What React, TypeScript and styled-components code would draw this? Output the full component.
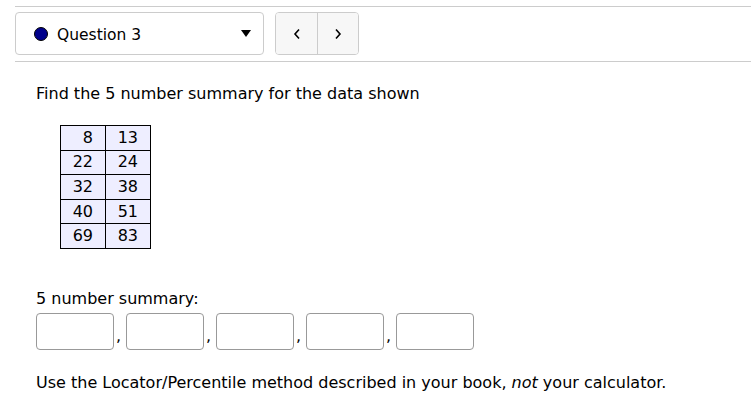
import * as React from 'react'
import styled, { createGlobalStyle } from 'styled-components'

const GlobalStyle = createGlobalStyle`
  html, body {
    margin: 0;
    padding: 0;
    background: #fff;
  }
  body {
    font-family: 'DejaVu Sans', Verdana, sans-serif;
    color: #000;
  }
`

const data = [
  [8, 13],
  [22, 24],
  [32, 38],
  [40, 51],
  [69, 83],
]

export default function App() {
  return (
    <>
      <GlobalStyle />
      <Page>
        <HeaderBar>
          <QuestionSelect>
            <StatusDot />
            <SelectLabel>Question 3</SelectLabel>
            <Caret />
          </QuestionSelect>
          <NavGroup>
            <NavButton aria-label='previous'>
              <Chevron dir='left' />
            </NavButton>
            <NavButton aria-label='next'>
              <Chevron dir='right' />
            </NavButton>
          </NavGroup>
        </HeaderBar>
        <Body>
          <Prompt>Find the 5 number summary for the data shown</Prompt>
          <DataTable>
            <tbody>
              {data.map((row, i) => (
                <tr key={i}>
                  {row.map((v, j) => (
                    <Cell key={j}>{v}</Cell>
                  ))}
                </tr>
              ))}
            </tbody>
          </DataTable>
          <SummaryLabel>5 number summary:</SummaryLabel>
          <AnswerRow>
            {[0, 1, 2, 3, 4].map(i => (
              <React.Fragment key={i}>
                <AnswerInput type='text' />
                {i < 4 && <Comma>,</Comma>}
              </React.Fragment>
            ))}
          </AnswerRow>
          <Note>
            Use the Locator/Percentile method described in your book, <em>not</em> your
            calculator.
          </Note>
        </Body>
      </Page>
    </>
  )
}

function Chevron({ dir }: { dir: 'left' | 'right' }) {
  return (
    <svg width='8' height='12' viewBox='0 0 8 12'>
      <path
        d={dir === 'left' ? 'M6 1.5 L2 6 L6 10.5' : 'M2 1.5 L6 6 L2 10.5'}
        fill='none'
        stroke='#000'
        strokeWidth='1.6'
      />
    </svg>
  )
}

const Page = styled.div`
  padding: 6px 0 0 15px;
`

const HeaderBar = styled.div`
  display: flex;
  align-items: flex-start;
  gap: 11px;
  height: 56px;
  box-sizing: border-box;
  padding-top: 5px;
  border-top: 1px solid #ccc;
  border-bottom: 1px solid #ccc;
`

const QuestionSelect = styled.div`
  display: flex;
  align-items: center;
  width: 249px;
  height: 43px;
  box-sizing: border-box;
  border: 1px solid #ccc;
  border-radius: 4px;
  padding: 0 12px 0 18px;
  background: #fff;
`

const StatusDot = styled.span`
  width: 12px;
  height: 12px;
  border-radius: 50%;
  background: #00008b;
  border: 1px solid #000;
  margin-right: 9px;
`

const SelectLabel = styled.span`
  flex: 1;
  font-size: 15.5px;
  padding-top: 2px;
`

const Caret = styled.span`
  width: 0;
  height: 0;
  border-left: 5px solid transparent;
  border-right: 5px solid transparent;
  border-top: 7px solid #000;
`

const NavGroup = styled.div`
  display: flex;
  height: 43px;
  border: 1px solid #ccc;
  border-radius: 4px;
  overflow: hidden;
  box-sizing: border-box;
`

const NavButton = styled.button`
  width: 41px;
  height: 100%;
  border: none;
  background: #f7f7f7;
  display: flex;
  align-items: center;
  justify-content: center;
  padding: 0;
  & + & {
    border-left: 1px solid #ccc;
  }
`

const Body = styled.div`
  padding: 22px 0 0 21px;
  font-size: 16px;
  line-height: 19px;
`

const Prompt = styled.p`
  margin: 0 0 22px;
`

const DataTable = styled.table`
  border-collapse: collapse;
  margin-left: 24px;
  background: #eeeeff;
  border: 1px solid #000;
`

const Cell = styled.td`
  border: 1px solid #000;
  width: 45px;
  height: 24.6px;
  padding: 0 12px 0 4px;
  text-align: right;
  box-sizing: border-box;
  line-height: 1;
`

const SummaryLabel = styled.p`
  margin: 40px 0 5px;
`

const AnswerRow = styled.div`
  display: flex;
  align-items: flex-end;
`

const AnswerInput = styled.input`
  width: 78px;
  height: 37px;
  box-sizing: border-box;
  border: 1px solid #999;
  border-radius: 4px;
  background: #fff;
  margin: 0;
`

const Comma = styled.span`
  width: 12px;
  padding-left: 2px;
  box-sizing: border-box;
  line-height: 1;
  margin-bottom: 6px;
`

const Note = styled.p`
  margin: 23px 0 0;
`
